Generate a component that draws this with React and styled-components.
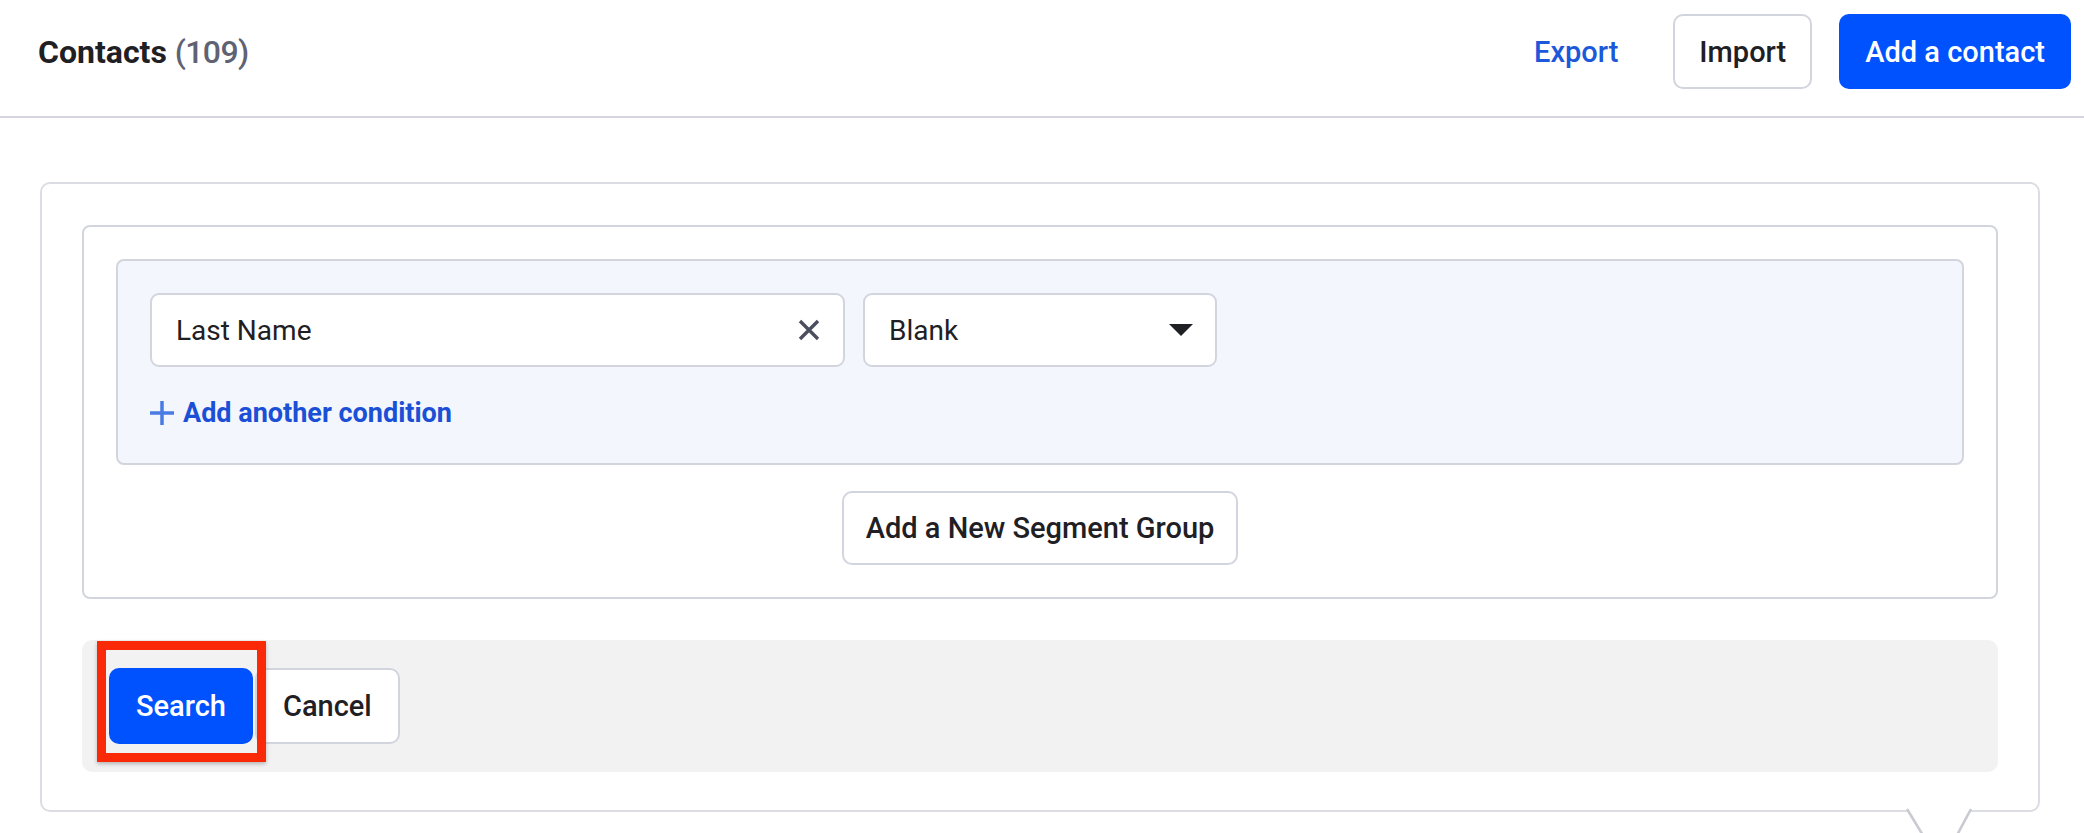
import React from "react";
import styled, { createGlobalStyle } from "styled-components";

const GlobalStyle = createGlobalStyle`
    html, body {
        margin: 0;
        padding: 0;
        background: #ffffff;
    }
    body {
        font-family: Roboto, "Liberation Sans", Arial, sans-serif;
        color: #1f2024;
    }
    * {
        box-sizing: border-box;
    }
`;

const Page = styled.div`
    height: 100vh;
    overflow: hidden;
`;

const Header = styled.header`
    display: flex;
    align-items: center;
    justify-content: space-between;
    height: 118px;
    padding: 14px 13px 27px 38px;
    border-bottom: 2px solid #d4d5df;
`;

const Title = styled.h1`
    margin: 0;
    font-size: 32px;
    font-weight: 700;
    color: #1f2024;
    line-height: 1;
`;

const Count = styled.span`
    font-weight: 500;
    color: #5f6273;
    letter-spacing: -0.6px;
`;

const Actions = styled.div`
    display: flex;
    align-items: center;
    gap: 27px;
`;

const Button = styled.button`
    display: inline-flex;
    align-items: center;
    justify-content: center;
    height: ${({ tall }) => (tall ? "76px" : "75px")};
    padding: 0 ${({ pad }) => pad || 24}px;
    font-family: inherit;
    font-size: 29px;
    font-weight: 500;
    border-radius: 10px;
    cursor: pointer;
    border: 2px solid ${({ primary }) => (primary ? "#0052ff" : "#d3d5de")};
    background: ${({ primary }) => (primary ? "#0052ff" : "#ffffff")};
    color: ${({ primary }) => (primary ? "#ffffff" : "#1f2024")};
`;

const LinkButton = styled(Button)`
    border-color: transparent;
    background: transparent;
    color: #1c58da;
    padding: 0 26px;
`;

const Card = styled.section`
    position: relative;
    margin: 64px 44px 0 40px;
    padding: 41px 40px 38px 40px;
    border: 2px solid #dcdde3;
    border-radius: 10px;
    background: #ffffff;
`;

const Tail = styled.svg`
    position: absolute;
    left: 1861px;
    top: calc(100% - 2px);
    display: block;
`;

const SegmentGroup = styled.div`
    display: flex;
    flex-direction: column;
    align-items: center;
    padding: 32px;
    border: 2px solid #d3d5de;
    border-radius: 8px;
`;

const Conditions = styled.div`
    align-self: stretch;
    padding: 32px 32px 34px 32px;
    background: #f3f6fd;
    border: 2px solid #d3d5de;
    border-radius: 8px;
`;

const ConditionRow = styled.div`
    display: flex;
    gap: 18px;
`;

const Field = styled.div`
    display: flex;
    align-items: center;
    justify-content: space-between;
    width: ${({ width }) => width}px;
    height: 74px;
    padding: 0 22px 0 24px;
    background: #ffffff;
    border: 2px solid #d3d5de;
    border-radius: 9px;
    font-size: 28px;
    font-weight: 400;
    color: #1f2024;
`;

const AddCondition = styled.a`
    display: inline-flex;
    align-items: center;
    gap: 9px;
    margin-top: 30px;
    height: 32px;
    font-size: 27px;
    font-weight: 700;
    color: #1a4fd6;
    cursor: pointer;
`;

const SegmentButton = styled(Button)`
    margin-top: 26px;
    height: 74px;
    padding: 0 22px;
`;

const Footer = styled.div`
    display: flex;
    align-items: center;
    gap: 2px;
    margin-top: 41px;
    padding: 28px 27px;
    background: #f2f2f3;
    border-radius: 10px;
`;

const Highlight = styled.span`
    position: relative;
    display: inline-flex;

    &::after {
        content: "";
        position: absolute;
        left: -12px;
        top: -27px;
        right: -13px;
        bottom: -18px;
        border: 9px solid #fa2a08;
        box-shadow: 0 2px 4px rgba(0, 0, 0, 0.25);
        pointer-events: none;
        z-index: 2;
    }
`;

function ClearIcon() {
    return (
        <svg width="24" height="24" viewBox="0 0 24 24">
            <path d="M3 3 L21 21 M21 3 L3 21" stroke="#4b4e5c" strokeWidth="3.4" />
        </svg>
    );
}

function Caret() {
    return (
        <svg width="24" height="12" viewBox="0 0 24 12">
            <path d="M0 0 L24 0 L12 12 Z" fill="#1f2024" />
        </svg>
    );
}

function Plus() {
    return (
        <svg width="24" height="24" viewBox="0 0 24 24">
            <path d="M12 0 V24 M0 12 H24" stroke="#4a7be4" strokeWidth="3.5" />
        </svg>
    );
}

export default function App() {
    return (
        <Page>
            <GlobalStyle />
            <Header>
                <Title>
                    Contacts <Count>(109)</Count>
                </Title>
                <Actions>
                    <LinkButton>Export</LinkButton>
                    <Button>Import</Button>
                    <Button primary>Add a contact</Button>
                </Actions>
            </Header>

            <Card>
                <SegmentGroup>
                    <Conditions>
                        <ConditionRow>
                            <Field width={695}>
                                <span>Last Name</span>
                                <ClearIcon />
                            </Field>
                            <Field width={354}>
                                <span>Blank</span>
                                <Caret />
                            </Field>
                        </ConditionRow>
                        <AddCondition>
                            <Plus />
                            Add another condition
                        </AddCondition>
                    </Conditions>
                    <SegmentButton>Add a New Segment Group</SegmentButton>
                </SegmentGroup>

                <Footer>
                    <Highlight>
                        <Button primary tall pad={25}>Search</Button>
                    </Highlight>
                    <Button tall pad={26}>Cancel</Button>
                </Footer>

                {/* bubble tail under the card */}
                <Tail width="72" height="60" viewBox="0 0 72 60">
                    <polygon points="3,0 69,0 38,58" fill="#ffffff" />
                    <path d="M4 1 L38 57 M68 1 L38 57" stroke="#c9cad2" strokeWidth="2.6" fill="none" />
                </Tail>
            </Card>
        </Page>
    );
}
